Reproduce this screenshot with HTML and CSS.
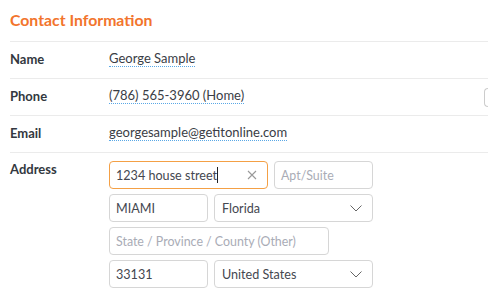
FILE: index.html
```
<!DOCTYPE html>
<html>
<head>
<meta charset="utf-8">
<link rel="stylesheet" href="styles.css">
</head>
<body>
<div class="panel">
  <div class="title">Contact Information</div>
  <div class="row">
    <div class="label">Name</div>
    <div class="value">George Sample</div>
  </div>
  <div class="row">
    <div class="label">Phone</div>
    <div class="value">(786) 565-3960 (Home)</div>
    <div class="btn"></div>
  </div>
  <div class="row">
    <div class="label">Email</div>
    <div class="value">georgesample@getitonline.com</div>
  </div>
  <div class="row address">
    <div class="label">Address</div>
    <div class="fields">
      <div class="frow">
        <div class="field focus w159"><span class="txt">1234 house street</span><span class="caret"></span>
          <svg class="clear" width="10" height="10" viewBox="0 0 10 10"><path d="M1 1L9 9M9 1L1 9" stroke="#999" stroke-width="1.1" fill="none"/></svg>
        </div>
        <div class="field w99"><span class="ph">Apt/Suite</span></div>
      </div>
      <div class="frow">
        <div class="field w99"><span class="txt">MIAMI</span></div>
        <div class="field w159 select"><span class="txt">Florida</span>
          <svg class="chev" width="12" height="7" viewBox="0 0 12 7"><path d="M0.5 0.5L6 6L11.5 0.5" stroke="#666" stroke-width="1" fill="none"/></svg>
        </div>
      </div>
      <div class="frow">
        <div class="field w220"><span class="ph">State / Province / County (Other)</span></div>
      </div>
      <div class="frow">
        <div class="field w99"><span class="txt">33131</span></div>
        <div class="field w159 select"><span class="txt">United States</span>
          <svg class="chev" width="12" height="7" viewBox="0 0 12 7"><path d="M0.5 0.5L6 6L11.5 0.5" stroke="#666" stroke-width="1" fill="none"/></svg>
        </div>
      </div>
    </div>
  </div>
</div>
</body>
</html>
```
FILE: styles.css
```
html, body {
  margin: 0;
  padding: 0;
  background: #fff;
  overflow: hidden;
}
body {
  font-family: Lato, "Open Sans", sans-serif;
  color: #333;
  width: 488px;
  height: 294px;
}
.panel {
  width: 478px;
  padding-left: 10px;
}
.title {
  font-size: 15.8px;
  font-weight: 700;
  color: #f2742c;
  line-height: 20px;
  padding-top: 10px;
  padding-bottom: 11px;
  border-bottom: 1px solid #ebebeb;
}
.row {
  display: flex;
  align-items: center;
  height: 33px;
  padding-bottom: 3px;
  border-bottom: 1px solid #ebebeb;
}
.label {
  width: 99px;
  flex: none;
  font-size: 13px;
  font-weight: 700;
  color: #333840;
}
.value {
  font-size: 13px;
  color: #3a3d45;
  line-height: 15px;
  border-bottom: 1px dotted #5aa8e6;
}
.btn {
  margin-left: auto;
  margin-top: 3px;
  box-sizing: border-box;
  width: 4px;
  height: 19px;
  border: 1px solid #ccc;
  border-right: none;
  border-radius: 4px 0 0 4px;
}
.row.address {
  height: auto;
  padding-bottom: 0;
  border-bottom: none;
  align-items: flex-start;
  padding-top: 8px;
}
.row.address .label {
  padding-top: 0;
  line-height: 16px;
}
.fields {
  display: flex;
  flex-direction: column;
  gap: 5px;
}
.frow {
  display: flex;
  gap: 6px;
}
.field {
  position: relative;
  box-sizing: border-box;
  height: 28px;
  border: 1px solid #d6d6d6;
  border-radius: 4px;
  display: flex;
  align-items: center;
  padding-left: 6px;
  font-size: 12.6px;
  color: #444750;
}
.field.focus {
  border-color: #f4a045;
}
.w99 { width: 99px; }
.w159 { width: 159px; }
.w220 { width: 220px; }
.ph {
  color: #a9acb6;
  font-size: 12.4px;
}
.caret {
  display: inline-block;
  width: 1px;
  height: 16px;
  background: #222;
  margin-left: 0px;
}
.clear {
  position: absolute;
  right: 10px;
  top: 8px;
}
.select .txt {
  padding-left: 1px;
}
.chev {
  position: absolute;
  right: 10px;
  top: 10px;
}
```
